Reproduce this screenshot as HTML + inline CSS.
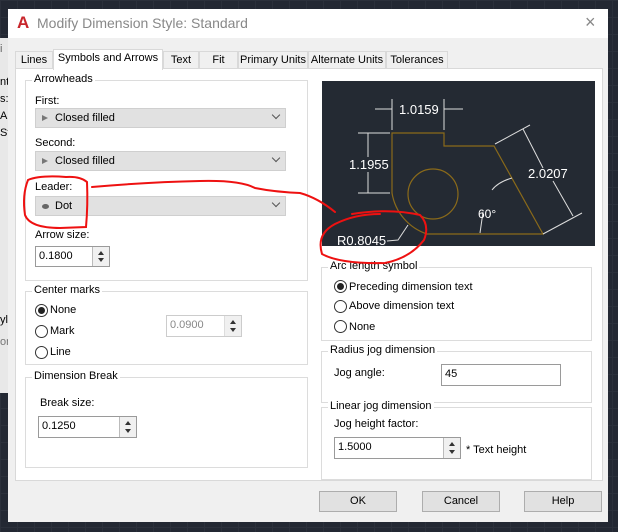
<!DOCTYPE html>
<html><head><meta charset="utf-8"><style>
*{box-sizing:border-box;margin:0;padding:0}
body{width:618px;height:532px;overflow:hidden;background:#232833;font-family:"Liberation Sans",sans-serif;font-size:11px;color:#000;position:relative;
background-image:linear-gradient(#2b303b 1px,transparent 1px),linear-gradient(90deg,#2b303b 1px,transparent 1px);background-size:17px 17px}
.a{position:absolute}
.t{position:absolute;white-space:nowrap;font-size:11px}
.grp{position:absolute;border:1px solid #dcdcdc}
.gl{position:absolute;top:-8px;left:6px;background:#fff;padding:0 2px;font-size:11px}
.dd{position:absolute;left:35px;width:251px;height:20px;background:#e1e1e1;border:1px solid #cfcfcf}
.dd span{position:absolute;left:19px;top:3px;font-size:11px}
.dd i{position:absolute;left:6px;top:6px;width:0;height:0;border-left:6px solid #777;border-top:3px solid transparent;border-bottom:3px solid transparent}
.dd b{position:absolute;right:6px;top:3px;width:6px;height:6px;border-right:1px solid #555;border-bottom:1px solid #555;transform:rotate(45deg)}
.sp{position:absolute;background:#fff;border:1px solid #9a9a9a}
.sp span{position:absolute;left:3px;top:3px}
.sb{position:absolute;right:0;top:0;width:17px;height:100%;border-left:1px solid #bbb;background:#f0f0f0}
.sb:before{content:"";position:absolute;left:5px;top:4px;border-bottom:4px solid #333;border-left:3px solid transparent;border-right:3px solid transparent}
.sb:after{content:"";position:absolute;left:5px;bottom:4px;border-top:4px solid #333;border-left:3px solid transparent;border-right:3px solid transparent}
.rd{position:absolute;width:13px;height:13px;border:1px solid #333;border-radius:50%;background:#fff}
.rd.on:after{content:"";position:absolute;left:2px;top:2px;width:7px;height:7px;border-radius:50%;background:#222}
.btn{position:absolute;top:491px;width:78px;height:21px;background:#e1e1e1;border:1px solid #adadad;text-align:center;line-height:19px}
.tab{position:absolute;top:51px;height:18px;border:1px solid #d9d9d9;background:#f0f0f0;line-height:16px;text-align:center}
</style></head><body>
<div class="a" style="left:0;top:38px;width:8px;height:355px;background:#e8e8e8"></div>
<div class="t" style="left:0;top:43px;color:#666">i</div>
<div class="t" style="left:0;top:76px">nt</div>
<div class="t" style="left:0;top:93px">s:</div>
<div class="t" style="left:0;top:110px">Ar</div>
<div class="t" style="left:0;top:127px">St</div>
<div class="t" style="left:0;top:314px">yl</div>
<div class="t" style="left:0;top:336px;color:#777">on</div>
<div class="a" style="left:8px;top:9px;width:600px;height:513px;background:#f0f0f0"></div>
<div class="a" style="left:8px;top:9px;width:600px;height:29px;background:#fff"></div>
<div class="t" style="left:17px;top:13px;font-size:17px;font-weight:bold;color:#c8262c">A</div>
<div class="t" style="left:37px;top:15px;font-size:14px;color:#888">Modify Dimension Style: Standard</div>
<div class="t" style="left:585px;top:12px;font-size:18px;color:#888">×</div>
<div class="a" style="left:15px;top:68px;width:588px;height:413px;background:#fff;border:1px solid #d9d9d9"></div>
<div class="tab" style="left:15px;width:38px">Lines</div>
<div class="tab" style="left:53px;top:49px;height:21px;width:110px;background:#fff;border-bottom:none">Symbols and Arrows</div>
<div class="tab" style="left:163px;width:36px">Text</div>
<div class="tab" style="left:199px;width:39px">Fit</div>
<div class="tab" style="left:238px;width:70px">Primary Units</div>
<div class="tab" style="left:308px;width:78px">Alternate Units</div>
<div class="tab" style="left:386px;width:62px">Tolerances</div>
<div class="grp" style="left:25px;top:80px;width:283px;height:201px"><div class="gl">Arrowheads</div></div>
<div class="t" style="left:35px;top:95px">First:</div>
<div class="dd" style="top:108px"><i></i><span>Closed filled</span><b></b></div>
<div class="t" style="left:35px;top:137px">Second:</div>
<div class="dd" style="top:151px"><i></i><span>Closed filled</span><b></b></div>
<div class="t" style="left:35px;top:181px">Leader:</div>
<div class="dd" style="top:196px"><i style="border:none;width:7px;height:5px;border-radius:50%;background:#666;top:7px"></i><span>Dot</span><b></b></div>
<div class="t" style="left:35px;top:229px">Arrow size:</div>
<div class="sp" style="left:35px;top:246px;width:75px;height:21px"><span>0.1800</span><div class="sb"></div></div>
<div class="grp" style="left:25px;top:291px;width:283px;height:74px"><div class="gl">Center marks</div></div>
<div class="rd on" style="left:35px;top:304px"></div><div class="t" style="left:50px;top:304px">None</div>
<div class="rd" style="left:35px;top:325px"></div><div class="t" style="left:50px;top:325px">Mark</div>
<div class="rd" style="left:35px;top:346px"></div><div class="t" style="left:50px;top:346px">Line</div>
<div class="sp" style="left:166px;top:315px;width:76px;height:22px;border-color:#ccc"><span style="color:#888">0.0900</span><div class="sb" style="border-color:#ddd"></div></div>
<div class="grp" style="left:25px;top:377px;width:283px;height:91px"><div class="gl">Dimension Break</div></div>
<div class="t" style="left:40px;top:397px">Break size:</div>
<div class="sp" style="left:38px;top:416px;width:99px;height:22px"><span>0.1250</span><div class="sb"></div></div>
<svg class="a" style="left:322px;top:81px" width="273" height="165" viewBox="0 0 273 165">
<rect width="273" height="165" fill="#242a33"/>
<g stroke="#8a6a1a" stroke-width="1.2" fill="none">
<path d="M70 52 H122 V65 H172 L221 153 H105 A52 52 0 0 1 70 112 Z"/>
<circle cx="111" cy="113" r="25"/>
</g>
<g stroke="#ddd" stroke-width="1" fill="none">
<path d="M70 49 V18 M122 49 V18 M53 28 H70 M122 28 H141"/>
<path d="M36 52 H68 M36 112 H68 M46 52 V76 M46 91 V112"/>
<path d="M173 63 L208 44 M221 153 L260 132 M201 48 L221 87 M231 100 L251 135"/>
<path d="M190 97 Q176 101 170 109 M161 131 L158 152"/>
<path d="M65 160 L76 159 L86 144"/>
</g>
<g fill="#fff" font-family="Liberation Sans" font-size="13">
<text x="77" y="33">1.0159</text>
<text x="27" y="88">1.1955</text>
<text x="206" y="97">2.0207</text>
<text x="156" y="137" font-size="12">60°</text>
<text x="15" y="164">R0.8045</text>
</g>
</svg>
<div class="grp" style="left:321px;top:267px;width:271px;height:74px"><div class="gl">Arc length symbol</div></div>
<div class="rd on" style="left:334px;top:280px"></div><div class="t" style="left:349px;top:281px">Preceding dimension text</div>
<div class="rd" style="left:334px;top:300px"></div><div class="t" style="left:349px;top:300px">Above dimension text</div>
<div class="rd" style="left:334px;top:320px"></div><div class="t" style="left:349px;top:321px">None</div>
<div class="grp" style="left:321px;top:351px;width:271px;height:52px"><div class="gl">Radius jog dimension</div></div>
<div class="t" style="left:334px;top:367px">Jog angle:</div>
<div class="sp" style="left:441px;top:364px;width:120px;height:22px"><span>45</span></div>
<div class="grp" style="left:321px;top:407px;width:271px;height:73px"><div class="gl">Linear jog dimension</div></div>
<div class="t" style="left:334px;top:418px">Jog height factor:</div>
<div class="sp" style="left:334px;top:437px;width:127px;height:22px"><span>1.5000</span><div class="sb"></div></div>
<div class="t" style="left:466px;top:444px">* Text height</div>
<div class="btn" style="left:319px">OK</div>
<div class="btn" style="left:422px">Cancel</div>
<div class="btn" style="left:524px">Help</div>
<svg class="a" style="left:0;top:0" width="618" height="532">
<g stroke="#ee1111" stroke-width="2" fill="none" stroke-linecap="round">
<path d="M66 177 Q40 175 28 180 Q22 195 25 215 Q30 228 60 228 L86 227 Q88 205 87 182 Q80 176 66 177"/>
<path d="M92 187 Q150 182 200 181 Q240 180 255 188 Q275 192 300 193 Q318 198 335 212"/>
<path d="M352 214 Q390 208 420 215 Q430 225 424 240 Q410 258 385 263 Q340 264 322 254 Q316 234 335 224 Q355 214 380 214"/>
</g>
</svg>
</body></html>
